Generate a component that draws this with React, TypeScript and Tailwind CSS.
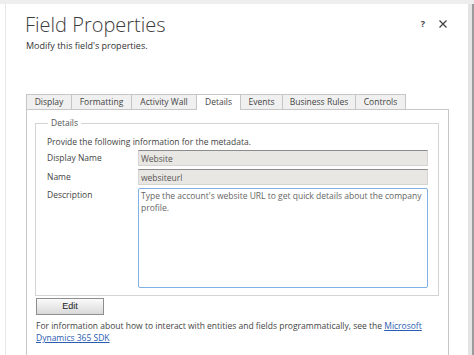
import React from 'react';

const tabs = [
    { label: 'Display', w: 'w-[46px]' },
    { label: 'Formatting', w: 'w-[61px]' },
    { label: 'Activity Wall', w: 'w-[66px]' },
    { label: 'Details', w: 'w-[45px]' },
    { label: 'Events', w: 'w-[43px]' },
    { label: 'Business Rules', w: 'w-[74px]' },
    { label: 'Controls', w: 'w-[51px]' },
];

const App: React.FC = () => {
    return (
        <div className="w-[474px] h-[355px] overflow-hidden bg-white border-t-4 border-[#eeeeee] flex text-[#444444]" style={{ fontFamily: '"Open Sans", "Noto Sans", sans-serif' }}>
            <div className="w-[5px]" />
            <div className="flex-1 border-l border-[#e8e8e8] pl-[20px] pt-[9px] flex flex-col">
                <div className="flex items-start">
                    <div className="flex-1">
                        <h1 className="text-[20px] leading-[24px] font-light text-[#3c3c3c] -ml-px">Field Properties</h1>
                        <p className="text-[9px] leading-[12px] mt-[3px] text-[#333333]">Modify this field's properties.</p>
                    </div>
                    <div className="flex items-center gap-[14px] pt-[6px] pr-[21px] text-[#444444]">
                        <span className="text-[9px] leading-[10px] font-bold">?</span>
                        <svg width="8" height="8" viewBox="0 0 8 8" stroke="#444444" strokeWidth="1.3">
                            <path d="M0.5 0.5 L7.5 7.5 M7.5 0.5 L0.5 7.5" />
                        </svg>
                    </div>
                </div>

                <div className="mt-[42px] w-[423px] flex flex-col">
                    <div className="flex items-start h-[15px] relative z-10">
                        {tabs.map((t, i) => (
                            <div
                                key={t.label}
                                className={`${t.w} ${i > 0 ? '-ml-px' : ''} text-center text-[8.5px] leading-[13px] border-t border-l border-r border-[#c6c6c6] ${t.label === 'Details' ? 'bg-white h-[16px]' : 'bg-[#f0f0f0] h-[15px]'}`}
                            >
                                {t.label}
                            </div>
                        ))}
                    </div>
                    <div className="border border-[#c6c6c6] h-[260px] pl-[8px] pr-[9px] pt-[7px]">
                        <fieldset className="border border-[#d4d4d4] pl-[11px] pr-[10px] pb-[7px]">
                            <legend className="text-[8.5px] leading-[12px] px-[3px] ml-[1px] text-[#555555]">Details</legend>
                            <p className="text-[8.5px] leading-[12px] mt-[7px]">Provide the following information for the metadata.</p>
                            <div className="grid grid-cols-[91px_1fr] gap-y-[3px] mt-[2px] text-[8.5px]">
                                <label className="leading-[16px]">Display Name</label>
                                <input readOnly value="Website" className="h-[16px] bg-[#e9e7e3] border border-[#d6d4d0] border-t-[#8c8c8c] px-[2px] text-[8.5px] text-[#555555] outline-none" />
                                <label className="leading-[16px]">Name</label>
                                <input readOnly value="websiteurl" className="h-[16px] bg-[#e9e7e3] border border-[#d6d4d0] border-t-[#8c8c8c] px-[2px] text-[8.5px] text-[#555555] outline-none" />
                                <label className="leading-[14px]">Description</label>
                                <textarea
                                    readOnly
                                    value="Type the account's website URL to get quick details about the company profile."
                                    className="block h-[100px] resize-none border border-[#7fb0e8] rounded-[2px] px-[2px] py-[1px] text-[8.5px] leading-[12px] text-[#666666] outline-none"
                                />
                            </div>
                        </fieldset>
                        <button className="block mt-[2px] ml-px w-[68px] h-[17px] border border-[#8e8e8e] bg-gradient-to-b from-[#fbfbfb] to-[#d9d9d9] text-[9px] leading-[15px] text-[#222222]" style={{ fontFamily: '"Liberation Sans", Arial, sans-serif' }}>
                            Edit
                        </button>
                        <p className="text-[8.5px] leading-[12px] mt-[5px] ml-px pr-[8px]">
                            For information about how to interact with entities and fields programmatically, see the{' '}
                            <a className="text-[#2a5db0] underline">Microsoft Dynamics 365 SDK</a>
                        </p>
                    </div>
                </div>
            </div>
            <div className="w-[4px] bg-[#e4e4e4]" />
            <div className="w-[2px] bg-[#9c9c9c]" />
        </div>
    );
};

export default App;
